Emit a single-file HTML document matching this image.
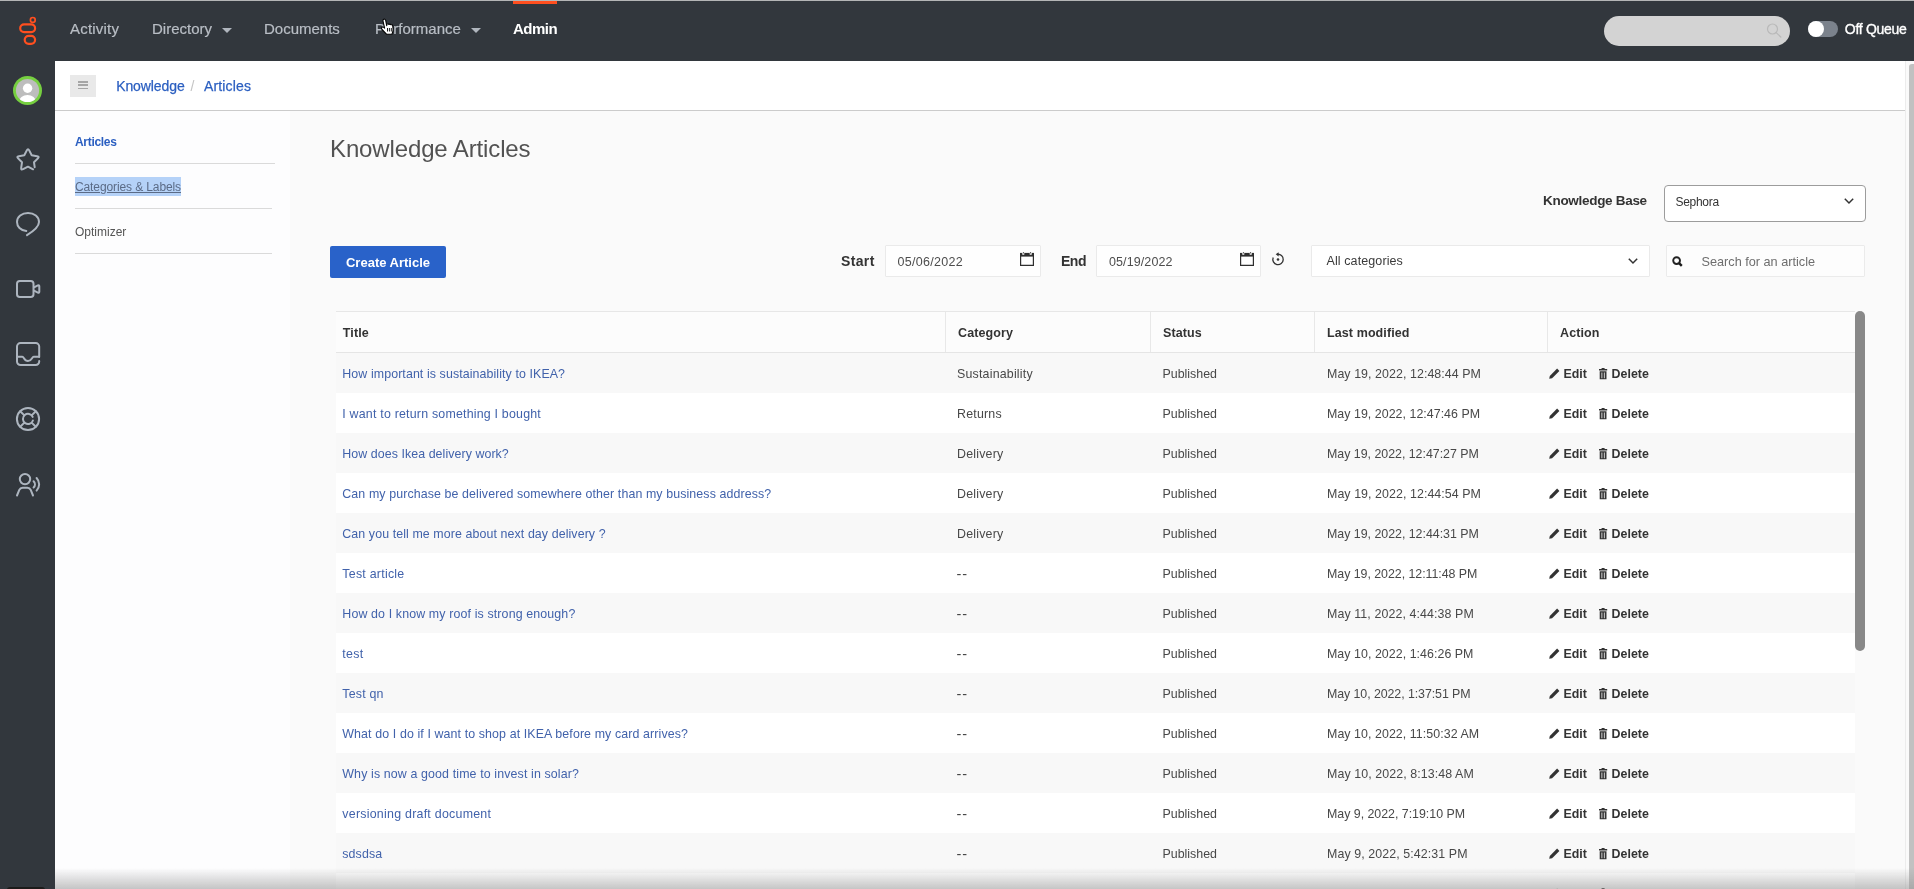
<!DOCTYPE html>
<html lang="en">
<head>
<meta charset="utf-8">
<title>Knowledge Articles</title>
<style>
*{box-sizing:border-box;margin:0;padding:0}
html,body{width:1914px;height:889px;overflow:hidden;background:#fafafa;font-family:"Liberation Sans",sans-serif;color:#3a3a3a}
#app{position:absolute;left:0;top:0;width:1914px;height:889px;overflow:hidden;will-change:transform}
svg{position:absolute;overflow:visible}
#topbar{position:absolute;left:0;top:0;width:1914px;height:61px;background:#32373d}
#topline{position:absolute;left:0;top:0;width:1914px;height:1px;background:#b4b5b6}
#side{position:absolute;left:0;top:0;width:55px;height:889px;background:#32373d}
.nav{position:absolute;top:20px;font-size:15px;line-height:18px;color:#b9bec5;-webkit-text-stroke:.2px #b9bec5;white-space:nowrap}
.nav.on{color:#fff;-webkit-text-stroke:0;font-weight:bold;letter-spacing:-.5px}
.caret{position:absolute;top:28px;width:0;height:0;border-left:5px solid transparent;border-right:5px solid transparent;border-top:5px solid #b0b6be}
#adminbar{position:absolute;left:513px;top:1px;width:44px;height:3px;background:#ff4f1f}
#gsearch{position:absolute;left:1604px;top:16px;width:186px;height:30px;border-radius:15px;background:#d3d3d3}
#toggle{position:absolute;left:1808px;top:21px;width:30px;height:16px;border-radius:8px;background:#7b828c}
#toggle i{position:absolute;left:0;top:0;width:16px;height:16px;border-radius:8px;background:#fff}
#offq{position:absolute;left:1844.800px;letter-spacing:-.3px;top:20px;font-size:14px;line-height:18px;color:#fff;-webkit-text-stroke:.35px #fff;white-space:nowrap}
#crumb{position:absolute;left:55px;top:61px;width:1850px;height:50px;background:#fff;border-bottom:1px solid #cbcbcb}
#burger{position:absolute;left:70px;top:75px;width:26px;height:22px;background:#e9e9e9}
#burger i{position:absolute;left:8px;width:10px;height:1.500px;background:#a6a6a6}
.bc{position:absolute;top:77.400px;font-size:14px;line-height:18px;color:#2b5fc1;-webkit-text-stroke:.25px #2b5fc1;white-space:nowrap}
#vscroll{position:absolute;left:1905px;top:61px;width:9px;height:828px;background:#fafafa;border-left:1px solid #ececec}
#vthumb{position:absolute;left:1909px;top:64px;width:5px;height:825px;background:#c1c1c1;border-radius:3px 0 0 0}
#leftnav{position:absolute;left:55px;top:111px;width:235px;height:778px;background:#fdfdfe}
.ln{position:absolute;left:75px;font-size:12px;line-height:14px;white-space:nowrap;color:#555}
.lnsep{position:absolute;left:75px;width:200px;height:1px;background:#dadada}
#h1{position:absolute;left:330px;top:134px;font-size:24px;line-height:30px;color:#525252;white-space:nowrap;letter-spacing:-.13px}
#create{position:absolute;left:330px;top:246px;width:116px;height:32px;background:#2962c9;color:#fff;font-weight:bold;font-size:13px;line-height:33.500px;text-align:center;border-radius:2px}
.lbl{position:absolute;font-weight:bold;color:#333;white-space:nowrap;font-size:14px;line-height:18px}
.inp{position:absolute;background:#fefefe;border:1px solid #eaeaea;border-radius:1px}
.inp span{position:absolute;top:8px;font-size:12.500px;line-height:14px;color:#4d4d4d;white-space:nowrap}
#tbl{position:absolute;left:336px;top:311px;width:1519px;height:578px;overflow:hidden}
#thead{position:absolute;left:0;top:0;width:1519px;height:42px;background:#fcfcfc;border-top:1px solid #e7e7e7;border-bottom:1px solid #e5e5e5}
.th{position:absolute;top:0;height:40px;font-size:12.500px;letter-spacing:.1px;line-height:42.500px;font-weight:bold;color:#333;padding-left:12px;border-left:1px solid #e8e8e8;white-space:nowrap}
.th:first-child{border-left:none;padding-left:6.800px}
.row{position:absolute;left:0;width:1519px;height:40px;font-size:12.400px;line-height:42.500px;color:#484848}
.row.odd{background:#f8f8f8}
.row.even{background:#fff}
.row span{position:absolute;top:0;white-space:nowrap}
.row .t{left:6.300px;color:#4162ab;letter-spacing:.1px}
.row .c{left:621px;letter-spacing:.2px}
.row .s{left:826.500px}
.row .m{left:991px;letter-spacing:.06px}
.row .e{left:1227.500px;font-weight:bold;color:#333}
.row .d{left:1275.500px;font-weight:bold;color:#333;letter-spacing:.05px}
.row svg{fill:#333;top:14.600px}
.row .pen{left:1213px;width:11px;height:11px}
.row .bin{left:1263.400px;width:8.200px;height:11.200px}
#tthumb{position:absolute;left:1855px;top:311px;width:10px;height:340px;background:#888;border-radius:5px}
#fade{position:absolute;left:55px;top:868px;width:1859px;height:21px;background:linear-gradient(to bottom,rgba(150,150,150,0),rgba(150,150,150,.55))}
.si{stroke:#adb5bf;stroke-width:2;fill:none;stroke-linecap:round;stroke-linejoin:round}
.cal{width:14px;height:14px}
.chev{width:10px;height:6px}
</style>
</head>
<body>
<div id="app">
<div id="topbar"></div>
<div id="side"></div>
<div id="topline"></div>
<div id="adminbar"></div>
<div class="nav" style="left:70px;letter-spacing:.2px">Activity</div>
<div class="nav" style="left:152px">Directory</div><div class="caret" style="left:222px"></div>
<div class="nav" style="left:264px">Documents</div>
<div class="nav" style="left:375px">Performance</div><div class="caret" style="left:471px"></div>
<div class="nav on" style="left:513px">Admin</div>
<div id="gsearch"></div>
<div id="toggle"><i></i></div>
<div id="offq">Off Queue</div>


<!-- logo -->
<svg style="left:0;top:0" width="55" height="61" viewBox="0 0 55 61"><g fill="none" stroke="#ff4f1f" stroke-width="2.200"><circle cx="32.800" cy="19.900" r="2.400" stroke-width="1.700"/><rect x="20.200" y="24.400" width="14.900" height="7.700" rx="3.850"/><rect x="24.700" y="35.800" width="10.400" height="8" rx="4"/></g></svg>
<!-- avatar -->
<svg style="left:13px;top:76px" width="29" height="29" viewBox="0 0 29 29"><defs><clipPath id="avc"><circle cx="14.500" cy="14.500" r="11.600"/></clipPath></defs><circle cx="14.500" cy="14.500" r="14.500" fill="#76cf40"/><circle cx="14.500" cy="14.500" r="11.600" fill="#bdbdbd"/><g clip-path="url(#avc)" fill="#fff"><circle cx="14.600" cy="12.200" r="4.700"/><ellipse cx="14.500" cy="26" rx="8.500" ry="7"/></g></svg>
<!-- sidebar icons -->
<svg style="left:0;top:140px" width="55" height="40" viewBox="0 140 55 40"><path class="si" d="M34.7 167.2L34.0 162.3L37.9 158.4Q39.7 156.6 37.1 156.2L31.7 155.3L29.2 150.4Q28.0 148.1 26.8 150.4L24.3 155.3L18.9 156.2Q16.3 156.6 18.1 158.4L22.0 162.3L21.2 167.8Q20.8 170.4 23.1 169.2L28.0 166.7L33.1 169.3"/></svg>
<svg style="left:0;top:205px" width="55" height="40" viewBox="0 205 55 40"><path class="si" d="M26.300 231C20.500 230.300 17 226.500 17 222c0-5.200 4.800-9 11-9s11 3.800 11 9c0 4.800-5 8.800-12 13.200"/></svg>
<svg style="left:0;top:270px" width="55" height="40" viewBox="0 270 55 40"><rect class="si" x="17" y="281" width="16.500" height="16" rx="2.800"/><path class="si" d="M34 287.300l3.900-2c.8-.4 1.400 0 1.400.9v5.600c0 .9-.6 1.300-1.400.9l-3.900-2"/></svg>
<svg style="left:0;top:335px" width="55" height="40" viewBox="0 335 55 40"><path class="si" d="M39.200 357V346.600a3.500 3.500 0 0 0-3.500-3.500H20.500a3.500 3.500 0 0 0-3.500 3.500v14.900a3.500 3.500 0 0 0 3.500 3.500h15.200a3.500 3.500 0 0 0 3.500-3.500v-.6"/><path class="si" d="M17.500 356.800H22.300c1.800 0 1.700 4.300 5.700 4.300s3.900-4.300 5.700-4.300h5"/></svg>
<svg style="left:0;top:400px" width="55" height="40" viewBox="0 400 55 40"><circle class="si" cx="28" cy="419" r="11.100"/><path class="si" d="M32.900 420.500a5.100 5.100 0 1 1-.2-3.600M20.200 411.200l4.200 4.200M35.800 411.200l-4.200 4.200M20.200 426.800l4.200-4.200M35.800 426.800l-4.200-4.200"/></svg>
<svg style="left:0;top:465px" width="55" height="40" viewBox="0 465 55 40"><circle class="si" cx="25" cy="479.100" r="5.200"/><path class="si" d="M17 495.500l2.300-5.600c.7-1.600 1.700-2.200 3.300-2.200h4.800c1.600 0 2.600.6 3.300 2.200l2.300 5.600" stroke-linecap="butt"/><path class="si" d="M33.600 481.300c1.800 1.800 1.800 4.400 0 6.200M36.600 478c3.400 3.600 3.400 9 0 12.600" stroke-linecap="butt"/></svg>
<!-- global search icon -->
<svg style="left:1765px;top:22px" width="18" height="18" viewBox="0 0 18 18"><g fill="none" stroke="#b9b9b9" stroke-width="1.200"><circle cx="7.500" cy="7" r="5"/><path d="M11.200 10.600l4.600 4.400" stroke-linecap="round"/></g></svg>
<!-- cursor -->
<svg style="left:380px;top:18px" width="15" height="18" viewBox="0 0 15 18"><path d="M3.800 1.200c.9-.3 1.700.3 1.900 1.200l1 5.300.3-1.600c.8-.5 1.500-.3 1.900.3.700-.4 1.500-.2 1.900.4.800-.3 1.700.1 1.900.9l.4 3.200c.1 1.700-.3 3.400-1 4.900l-.2.500H6.700L2 11.500c-.7-.8-.6-1.700 0-2.200.7-.5 1.500-.4 2.100.2l.5.600L3 3c-.2-.8.100-1.500.8-1.800z" fill="#fff" stroke="#000" stroke-width="1.100" stroke-linejoin="round"/><path d="M7.500 10v3.500M9.400 10v3.500M11.300 10v3.500" stroke="#000" stroke-width=".9"/></svg>

<div id="crumb"></div>
<div id="burger"><i style="top:6px"></i><i style="top:9.300px"></i><i style="top:12.600px"></i></div>
<div class="bc" style="left:116.200px;letter-spacing:-.1px">Knowledge</div>
<div class="bc" style="left:190.500px;color:#c4c4c4;-webkit-text-stroke:0">/</div>
<div class="bc" style="left:204px;letter-spacing:.14px">Articles</div>
<div id="vscroll"></div><div id="vthumb"></div>

<div id="leftnav"></div>
<div class="ln" style="top:135px;color:#2b5fc1;font-weight:bold;letter-spacing:-.3px">Articles</div>
<div class="lnsep" style="top:163px"></div>
<div class="ln" style="top:180px;text-decoration:underline;letter-spacing:-.11px;color:#5b6b86;background:#b5d2f8;box-shadow:0 -3px 0 #b5d2f8,0 2px 0 #b5d2f8">Categories &amp; Labels</div>
<div class="lnsep" style="top:208px;width:197px"></div>
<div class="ln" style="top:225px">Optimizer</div>
<div class="lnsep" style="top:253px;width:197px"></div>

<div id="h1">Knowledge Articles</div>
<div id="create">Create Article</div>


<div class="lbl" style="left:1543px;top:192px;font-size:13.500px;letter-spacing:-.3px">Knowledge Base</div>
<div class="inp" style="left:1664px;top:185px;width:202px;height:37px;border-color:#9c9c9c;border-radius:4px;background:#fff"><span style="left:10.500px;top:9px;font-size:12px;letter-spacing:-.3px;color:#333">Sephora</span><svg class="chev" style="left:178.500px;top:12.200px" viewBox="0 0 10 6"><path d="M.8 .8L5 5 9.200 .8" fill="none" stroke="#333" stroke-width="1.500"/></svg></div>
<div class="lbl" style="left:841px;top:252px;letter-spacing:.35px">Start</div>
<div class="inp" style="left:885px;top:245px;width:155.500px;height:31.500px"><span style="left:11.500px;top:8.700px;letter-spacing:.3px">05/06/2022</span><svg class="cal" style="left:134px;top:6px" viewBox="0 0 14 14"><path d="M.6 1.500h12.800v11.900H.6z" fill="none" stroke="#2e2e2e" stroke-width="1.200"/><path d="M0 .9h14v3.700H0z" fill="#2e2e2e"/><path d="M2.300 .9h2v1.900h-2zM9.700 .9h2v1.900h-2z" fill="#fefefe"/><path d="M3 0h.7v1.600H3zM10.300 0h.7v1.600h-.7z" fill="#2e2e2e"/></svg></div>
<div class="lbl" style="left:1061px;top:252px;letter-spacing:-.5px">End</div>
<div class="inp" style="left:1095.500px;top:245px;width:165px;height:31.500px"><span style="left:12.500px;top:8.700px;letter-spacing:.1px">05/19/2022</span><svg class="cal" style="left:143.500px;top:6px" viewBox="0 0 14 14"><path d="M.6 1.500h12.800v11.900H.6z" fill="none" stroke="#2e2e2e" stroke-width="1.200"/><path d="M0 .9h14v3.700H0z" fill="#2e2e2e"/><path d="M2.300 .9h2v1.900h-2zM9.700 .9h2v1.900h-2z" fill="#fefefe"/><path d="M3 0h.7v1.600H3zM10.300 0h.7v1.600h-.7z" fill="#2e2e2e"/></svg></div>
<svg style="left:1271px;top:252px" width="14" height="14" viewBox="0 0 14 14"><path d="M6.300 2.300A5.200 5.200 0 1 1 2.200 5.500" fill="none" stroke="#333" stroke-width="1.300"/><path d="M7.600 .2v4.200L4.700 2.300z" fill="#333"/><circle cx="7" cy="7.500" r="1.300" fill="#333"/></svg>
<div class="inp" style="left:1310.500px;top:245px;width:339px;height:31.500px;background:#fff"><span style="left:15px;font-size:12.500px;letter-spacing:.1px;color:#3a3a3a">All categories</span><svg class="chev" style="left:316px;top:12.400px" viewBox="0 0 10 6"><path d="M.8 .8L5 5 9.200 .8" fill="none" stroke="#333" stroke-width="1.500"/></svg></div>
<div class="inp" style="left:1665.500px;top:245px;width:199.500px;height:31.500px;background:#fdfdfd;border-color:#ebebeb"><svg style="left:5px;top:9.500px" width="12" height="12" viewBox="0 0 12 12"><circle cx="4.600" cy="4.600" r="3.400" fill="none" stroke="#222" stroke-width="1.900"/><path d="M6.800 6.800l3 3" stroke="#1c1c1c" stroke-width="2.400" stroke-linecap="butt"/></svg><span style="left:35px;top:8.500px;font-size:12.700px;color:#6e6e6e">Search for an article</span></div>

<div id="tbl">
<div id="thead"><div class="th" style="left:0;width:610px">Title</div><div class="th" style="left:609px;width:205px">Category</div><div class="th" style="left:814px;width:164px">Status</div><div class="th" style="left:978px;width:233px">Last modified</div><div class="th" style="left:1211px;width:308px">Action</div></div>
<!--ROWS-->
<div class="row odd" style="top:42px"><span class="t" style="letter-spacing:0.095px">How important is sustainability to IKEA?</span><span class="c">Sustainability</span><span class="s">Published</span><span class="m" style="letter-spacing:0.071px">May 19, 2022, 12:48:44 PM</span><svg class="pen" viewBox="0 0 11 11"><path d="M.2 10.800l.6-2.900L8.100 .6l2.300 2.300-7.300 7.300z"/></svg><span class="e">Edit</span><svg class="bin" viewBox="0 0 8.200 11.200"><path d="M2.600 0h3v1.100h2.600v1.400H0V1.100h2.600zM.7 3.200h6.800v8H.7zM2.500 4.400v5.800h.8V4.400zm2.400 0v5.800h.8V4.400z" fill-rule="evenodd"/></svg><span class="d">Delete</span></div>
<div class="row even" style="top:82px"><span class="t" style="letter-spacing:0.206px">I want to return something I bought</span><span class="c">Returns</span><span class="s">Published</span><span class="m" style="letter-spacing:0.035px">May 19, 2022, 12:47:46 PM</span><svg class="pen" viewBox="0 0 11 11"><path d="M.2 10.800l.6-2.900L8.100 .6l2.300 2.300-7.300 7.300z"/></svg><span class="e">Edit</span><svg class="bin" viewBox="0 0 8.200 11.200"><path d="M2.600 0h3v1.100h2.600v1.400H0V1.100h2.600zM.7 3.200h6.800v8H.7zM2.500 4.400v5.800h.8V4.400zm2.400 0v5.800h.8V4.400z" fill-rule="evenodd"/></svg><span class="d">Delete</span></div>
<div class="row odd" style="top:122px"><span class="t" style="letter-spacing:0.068px">How does Ikea delivery work?</span><span class="c">Delivery</span><span class="s">Published</span><span class="m" style="letter-spacing:-0.017px">May 19, 2022, 12:47:27 PM</span><svg class="pen" viewBox="0 0 11 11"><path d="M.2 10.800l.6-2.900L8.100 .6l2.300 2.300-7.300 7.300z"/></svg><span class="e">Edit</span><svg class="bin" viewBox="0 0 8.200 11.200"><path d="M2.600 0h3v1.100h2.600v1.400H0V1.100h2.600zM.7 3.200h6.800v8H.7zM2.500 4.400v5.800h.8V4.400zm2.400 0v5.800h.8V4.400z" fill-rule="evenodd"/></svg><span class="d">Delete</span></div>
<div class="row even" style="top:162px"><span class="t" style="letter-spacing:0.108px">Can my purchase be delivered somewhere other than my business address?</span><span class="c">Delivery</span><span class="s">Published</span><span class="m" style="letter-spacing:0.071px">May 19, 2022, 12:44:54 PM</span><svg class="pen" viewBox="0 0 11 11"><path d="M.2 10.800l.6-2.900L8.100 .6l2.300 2.300-7.300 7.300z"/></svg><span class="e">Edit</span><svg class="bin" viewBox="0 0 8.200 11.200"><path d="M2.600 0h3v1.100h2.600v1.400H0V1.100h2.600zM.7 3.200h6.800v8H.7zM2.500 4.400v5.800h.8V4.400zm2.400 0v5.800h.8V4.400z" fill-rule="evenodd"/></svg><span class="d">Delete</span></div>
<div class="row odd" style="top:202px"><span class="t" style="letter-spacing:0.096px">Can you tell me more about next day delivery ?</span><span class="c">Delivery</span><span class="s">Published</span><span class="m" style="letter-spacing:-0.017px">May 19, 2022, 12:44:31 PM</span><svg class="pen" viewBox="0 0 11 11"><path d="M.2 10.800l.6-2.900L8.100 .6l2.300 2.300-7.300 7.300z"/></svg><span class="e">Edit</span><svg class="bin" viewBox="0 0 8.200 11.200"><path d="M2.600 0h3v1.100h2.600v1.400H0V1.100h2.600zM.7 3.200h6.800v8H.7zM2.500 4.400v5.800h.8V4.400zm2.400 0v5.800h.8V4.400z" fill-rule="evenodd"/></svg><span class="d">Delete</span></div>
<div class="row even" style="top:242px"><span class="t" style="letter-spacing:0.248px">Test article</span><span class="c" style="font-size:14.500px;letter-spacing:.9px;left:620.500px">--</span><span class="s">Published</span><span class="m" style="letter-spacing:-0.037px">May 19, 2022, 12:11:48 PM</span><svg class="pen" viewBox="0 0 11 11"><path d="M.2 10.800l.6-2.900L8.100 .6l2.300 2.300-7.300 7.300z"/></svg><span class="e">Edit</span><svg class="bin" viewBox="0 0 8.200 11.200"><path d="M2.600 0h3v1.100h2.600v1.400H0V1.100h2.600zM.7 3.200h6.800v8H.7zM2.500 4.400v5.800h.8V4.400zm2.400 0v5.800h.8V4.400z" fill-rule="evenodd"/></svg><span class="d">Delete</span></div>
<div class="row odd" style="top:282px"><span class="t" style="letter-spacing:0.132px">How do I know my roof is strong enough?</span><span class="c" style="font-size:14.500px;letter-spacing:.9px;left:620.500px">--</span><span class="s">Published</span><span class="m" style="letter-spacing:0.103px">May 11, 2022, 4:44:38 PM</span><svg class="pen" viewBox="0 0 11 11"><path d="M.2 10.800l.6-2.900L8.100 .6l2.300 2.300-7.300 7.300z"/></svg><span class="e">Edit</span><svg class="bin" viewBox="0 0 8.200 11.200"><path d="M2.600 0h3v1.100h2.600v1.400H0V1.100h2.600zM.7 3.200h6.800v8H.7zM2.500 4.400v5.800h.8V4.400zm2.400 0v5.800h.8V4.400z" fill-rule="evenodd"/></svg><span class="d">Delete</span></div>
<div class="row even" style="top:322px"><span class="t" style="letter-spacing:0.329px">test</span><span class="c" style="font-size:14.500px;letter-spacing:.9px;left:620.500px">--</span><span class="s">Published</span><span class="m" style="letter-spacing:0.048px">May 10, 2022, 1:46:26 PM</span><svg class="pen" viewBox="0 0 11 11"><path d="M.2 10.800l.6-2.900L8.100 .6l2.300 2.300-7.300 7.300z"/></svg><span class="e">Edit</span><svg class="bin" viewBox="0 0 8.200 11.200"><path d="M2.600 0h3v1.100h2.600v1.400H0V1.100h2.600zM.7 3.200h6.800v8H.7zM2.500 4.400v5.800h.8V4.400zm2.400 0v5.800h.8V4.400z" fill-rule="evenodd"/></svg><span class="d">Delete</span></div>
<div class="row odd" style="top:362px"><span class="t" style="letter-spacing:0.207px">Test qn</span><span class="c" style="font-size:14.500px;letter-spacing:.9px;left:620.500px">--</span><span class="s">Published</span><span class="m" style="letter-spacing:-0.077px">May 10, 2022, 1:37:51 PM</span><svg class="pen" viewBox="0 0 11 11"><path d="M.2 10.800l.6-2.900L8.100 .6l2.300 2.300-7.300 7.300z"/></svg><span class="e">Edit</span><svg class="bin" viewBox="0 0 8.200 11.200"><path d="M2.600 0h3v1.100h2.600v1.400H0V1.100h2.600zM.7 3.200h6.800v8H.7zM2.500 4.400v5.800h.8V4.400zm2.400 0v5.800h.8V4.400z" fill-rule="evenodd"/></svg><span class="d">Delete</span></div>
<div class="row even" style="top:402px"><span class="t" style="letter-spacing:0.111px">What do I do if I want to shop at IKEA before my card arrives?</span><span class="c" style="font-size:14.500px;letter-spacing:.9px;left:620.500px">--</span><span class="s">Published</span><span class="m" style="letter-spacing:0.059px">May 10, 2022, 11:50:32 AM</span><svg class="pen" viewBox="0 0 11 11"><path d="M.2 10.800l.6-2.900L8.100 .6l2.300 2.300-7.300 7.300z"/></svg><span class="e">Edit</span><svg class="bin" viewBox="0 0 8.200 11.200"><path d="M2.600 0h3v1.100h2.600v1.400H0V1.100h2.600zM.7 3.200h6.800v8H.7zM2.500 4.400v5.800h.8V4.400zm2.400 0v5.800h.8V4.400z" fill-rule="evenodd"/></svg><span class="d">Delete</span></div>
<div class="row odd" style="top:442px"><span class="t" style="letter-spacing:0.126px">Why is now a good time to invest in solar?</span><span class="c" style="font-size:14.500px;letter-spacing:.9px;left:620.500px">--</span><span class="s">Published</span><span class="m" style="letter-spacing:0.093px">May 10, 2022, 8:13:48 AM</span><svg class="pen" viewBox="0 0 11 11"><path d="M.2 10.800l.6-2.900L8.100 .6l2.300 2.300-7.300 7.300z"/></svg><span class="e">Edit</span><svg class="bin" viewBox="0 0 8.200 11.200"><path d="M2.600 0h3v1.100h2.600v1.400H0V1.100h2.600zM.7 3.200h6.800v8H.7zM2.500 4.400v5.800h.8V4.400zm2.400 0v5.800h.8V4.400z" fill-rule="evenodd"/></svg><span class="d">Delete</span></div>
<div class="row even" style="top:482px"><span class="t" style="letter-spacing:0.253px">versioning draft document</span><span class="c" style="font-size:14.500px;letter-spacing:.9px;left:620.500px">--</span><span class="s">Published</span><span class="m" style="letter-spacing:-0.02px">May 9, 2022, 7:19:10 PM</span><svg class="pen" viewBox="0 0 11 11"><path d="M.2 10.800l.6-2.900L8.100 .6l2.300 2.300-7.300 7.300z"/></svg><span class="e">Edit</span><svg class="bin" viewBox="0 0 8.200 11.200"><path d="M2.600 0h3v1.100h2.600v1.400H0V1.100h2.600zM.7 3.200h6.800v8H.7zM2.500 4.400v5.800h.8V4.400zm2.400 0v5.800h.8V4.400z" fill-rule="evenodd"/></svg><span class="d">Delete</span></div>
<div class="row odd" style="top:522px"><span class="t" style="letter-spacing:0.106px">sdsdsa</span><span class="c" style="font-size:14.500px;letter-spacing:.9px;left:620.500px">--</span><span class="s">Published</span><span class="m" style="letter-spacing:0.093px">May 9, 2022, 5:42:31 PM</span><svg class="pen" viewBox="0 0 11 11"><path d="M.2 10.800l.6-2.900L8.100 .6l2.300 2.300-7.300 7.300z"/></svg><span class="e">Edit</span><svg class="bin" viewBox="0 0 8.200 11.200"><path d="M2.600 0h3v1.100h2.600v1.400H0V1.100h2.600zM.7 3.200h6.800v8H.7zM2.500 4.400v5.800h.8V4.400zm2.400 0v5.800h.8V4.400z" fill-rule="evenodd"/></svg><span class="d">Delete</span></div>
<div class="row even" style="top:562px"><span class="t" style="letter-spacing:0.1px">test draft</span><span class="c" style="font-size:14.500px;letter-spacing:.9px;left:620.500px">--</span><span class="s">Published</span><span class="m" style="letter-spacing:0.05px">May 9, 2022, 5:30:12 PM</span><svg class="pen" viewBox="0 0 11 11"><path d="M.2 10.800l.6-2.900L8.100 .6l2.300 2.300-7.300 7.300z"/></svg><span class="e">Edit</span><svg class="bin" viewBox="0 0 8.200 11.200"><path d="M2.600 0h3v1.100h2.600v1.400H0V1.100h2.600zM.7 3.200h6.800v8H.7zM2.500 4.400v5.800h.8V4.400zm2.400 0v5.800h.8V4.400z" fill-rule="evenodd"/></svg><span class="d">Delete</span></div>
<!--/ROWS-->
</div>
<div id="tthumb"></div>
<div id="fade"></div>
<div style="position:absolute;left:7px;top:887px;width:38px;height:6px;border-radius:3px;background:#1c1b1a"></div>
</div>
</body>
</html>
